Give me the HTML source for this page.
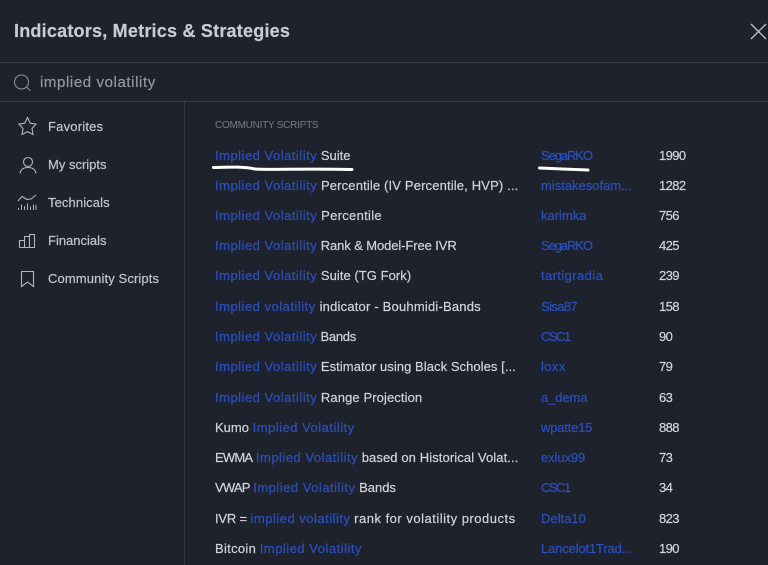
<!DOCTYPE html>
<html><head><meta charset="utf-8"><style>
html,body{margin:0;padding:0;background:#1e222d}
#p{position:relative;width:768px;height:565px;overflow:hidden;background:#1e222d;font-family:"Liberation Sans",sans-serif;color:#d1d4dc;font-size:13px;-webkit-text-stroke:.2px}
.t{position:absolute;white-space:nowrap;line-height:16px}
.t b{font-weight:normal;color:#2b50bd;letter-spacing:.5px}
.l{position:absolute;background:#363a45}
.a{color:#2b50bd}
.n{letter-spacing:-.6px}
svg{position:absolute;left:0;top:0}
</style></head><body><div id="p">
<div class="t" style="left:14px;top:19px;line-height:24px;font-size:18px;font-weight:bold;color:#c8cbd3;letter-spacing:.22px">Indicators, Metrics &amp; Strategies</div>
<div class="l" style="left:0;top:62px;width:768px;height:1px"></div>
<div class="l" style="left:0;top:101px;width:768px;height:1px"></div>
<div class="l" style="left:184px;top:102px;width:1px;height:463px"></div>
<div class="t" style="left:40px;top:74px;line-height:18px;font-size:15px;color:#9598a1;letter-spacing:.6px">implied volatility</div>
<svg width="768" height="565" fill="none" stroke="#b2b5be" stroke-width="1.1">
<path d="M751 24L766 39M766 24L751 39" stroke="#c8cbd3" stroke-width="1.300"/>
<circle cx="21.500" cy="82" r="7" stroke="#8a8e98"/><path d="M26.500 87L30.500 91" stroke="#8a8e98"/>
<path d="M27.500 117.500L30.300 123.200L36 124.100L32 128.500L33 134.500L27.500 131.600L22 134.500L23 128.500L19 124.100L24.700 123.200Z"/>
<circle cx="28" cy="162" r="4.500"/><path d="M20 173.500C20.500 169.500 23.500 167.500 28 167.500C32.500 167.500 35.500 169.500 36 173.500"/>
<path d="M18 201L22 196.500L27 199.500L31 199L36 195"/>
<path d="M18.500 210V208M21.500 210V204.500M24.500 210V206M27.500 210V203.500M30.500 210V206.500M33.500 210V204.500M36 210V205" stroke-width="1"/>
<path d="M19.500 247.500V240.500H24.500V247.500M24.500 247.500V236.500H29.500V247.500M29.500 247.500V234.500H34.500V247.500H19.500Z"/>
<path d="M21.500 271.500H33.500V286.500L27.500 282L21.500 286.500Z"/>
<path d="M213.500 167.500C230 167 245 166.500 255 169C270 170 300 168.500 352 169.500" stroke="#fff" stroke-width="3" stroke-linecap="round"/>
<path d="M539.500 168C550 168.500 575 169.500 588 170" stroke="#fff" stroke-width="3" stroke-linecap="round"/>
</svg>
<div class="t" style="left:48px;top:119px;color:#c3c6ce;letter-spacing:.2px">Favorites</div>
<div class="t" style="left:48px;top:157px;color:#c3c6ce">My scripts</div>
<div class="t" style="left:48px;top:195px;color:#c3c6ce;letter-spacing:.1px">Technicals</div>
<div class="t" style="left:48px;top:233px;color:#c3c6ce">Financials</div>
<div class="t" style="left:48px;top:271px;color:#c3c6ce;letter-spacing:.12px">Community Scripts</div>
<div class="t" style="left:215px;top:118px;font-size:10px;color:#787b86;letter-spacing:-.25px;-webkit-text-stroke:0">COMMUNITY SCRIPTS</div>

<div class="t" style="left:215px;top:148px"><b>Implied Volatility</b> Suite</div><div class="t a" style="left:541px;top:148px;letter-spacing:-1.1px">SegaRKO</div><div class="t n" style="left:659px;top:148px">1990</div>
<div class="t" style="left:215px;top:178px;letter-spacing:.15px"><b>Implied Volatility</b> Percentile (IV Percentile, HVP) ...</div><div class="t a" style="left:541px;top:178px">mistakesofam...</div><div class="t n" style="left:659px;top:178px">1282</div>
<div class="t" style="left:215px;top:208px;letter-spacing:.3px"><b>Implied Volatility</b> Percentile</div><div class="t a" style="left:541px;top:208px">karimka</div><div class="t n" style="left:659px;top:208px">756</div>
<div class="t" style="left:215px;top:238px;letter-spacing:-.1px"><b>Implied Volatility</b> Rank &amp; Model-Free IVR</div><div class="t a" style="left:541px;top:238px;letter-spacing:-1.1px">SegaRKO</div><div class="t n" style="left:659px;top:238px">425</div>
<div class="t" style="left:215px;top:268px;letter-spacing:.05px"><b>Implied Volatility</b> Suite (TG Fork)</div><div class="t a" style="left:541px;top:268px;letter-spacing:.4px">tartigradia</div><div class="t n" style="left:659px;top:268px">239</div>
<div class="t" style="left:215px;top:299px;letter-spacing:.2px"><b>Implied volatility</b> indicator - Bouhmidi-Bands</div><div class="t a" style="left:541px;top:299px;letter-spacing:-.6px">Sisa87</div><div class="t n" style="left:659px;top:299px">158</div>
<div class="t" style="left:215px;top:329px;letter-spacing:-.3px"><b>Implied Volatility</b> Bands</div><div class="t a" style="left:541px;top:329px;letter-spacing:-1.5px">CSC1</div><div class="t n" style="left:659px;top:329px">90</div>
<div class="t" style="left:215px;top:359px;letter-spacing:.06px"><b>Implied Volatility</b> Estimator using Black Scholes [...</div><div class="t a" style="left:541px;top:359px;letter-spacing:.4px">loxx</div><div class="t n" style="left:659px;top:359px">79</div>
<div class="t" style="left:215px;top:390px;letter-spacing:.1px"><b>Implied Volatility</b> Range Projection</div><div class="t a" style="left:541px;top:390px;letter-spacing:-.1px">a_dema</div><div class="t n" style="left:659px;top:390px">63</div>
<div class="t" style="left:215px;top:420px">Kumo <b>Implied Volatility</b></div><div class="t a" style="left:541px;top:420px;letter-spacing:-.2px">wpatte15</div><div class="t n" style="left:659px;top:420px">888</div>
<div class="t" style="left:215px;top:450px"><span style="letter-spacing:-.8px">EWMA</span> <b>Implied Volatility</b> <span style="letter-spacing:.1px">based on Historical Volat...</span></div><div class="t a" style="left:541px;top:450px;letter-spacing:-.1px">exlux99</div><div class="t n" style="left:659px;top:450px">73</div>
<div class="t" style="left:215px;top:480px"><span style="letter-spacing:-.8px">VWAP</span> <b>Implied Volatility</b> Bands</div><div class="t a" style="left:541px;top:480px;letter-spacing:-1.5px">CSC1</div><div class="t n" style="left:659px;top:480px">34</div>
<div class="t" style="left:215px;top:511px"><span style="letter-spacing:-.2px">IVR =</span> <b>implied volatility</b> <span style="letter-spacing:.5px">rank for volatility products</span></div><div class="t a" style="left:541px;top:511px">Delta10</div><div class="t n" style="left:659px;top:511px">823</div>
<div class="t" style="left:215px;top:541px"><span style="letter-spacing:.3px">Bitcoin</span> <b>Implied Volatility</b></div><div class="t a" style="left:541px;top:541px;letter-spacing:-.15px">Lancelot1Trad...</div><div class="t n" style="left:659px;top:541px">190</div>
</div></body></html>
